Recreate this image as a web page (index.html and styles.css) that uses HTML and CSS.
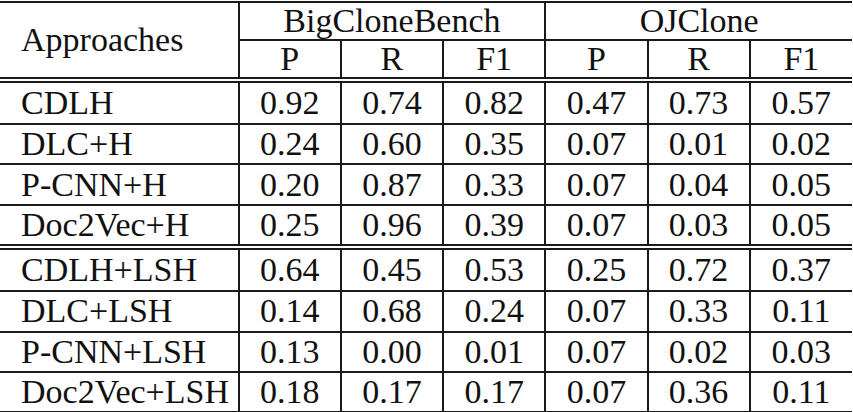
FILE: index.html
```html
<!DOCTYPE html>
<html lang="en">
<head>
    <meta charset="UTF-8">
    <meta name="viewport" content="width=device-width, initial-scale=1.0">
    <title>Clone Detection Results</title>
    <link rel="stylesheet" href="styles.css">
</head>
<body>
    <table class="results">
        <colgroup>
            <col class="col-name">
            <col class="col-num">
            <col class="col-num">
            <col class="col-num">
            <col class="col-num">
            <col class="col-num">
            <col class="col-num">
        </colgroup>
        <thead>
            <tr class="head-top">
                <th rowspan="2" class="name">Approaches</th>
                <th colspan="3">BigCloneBench</th>
                <th colspan="3" class="last">OJClone</th>
            </tr>
            <tr class="head-sub">
                <th>P</th>
                <th>R</th>
                <th>F1</th>
                <th>P</th>
                <th>R</th>
                <th class="last">F1</th>
            </tr>
        </thead>
        <tbody>
            <!-- double rule under the header -->
            <tr class="gap"><td colspan="7"></td></tr>
            <tr class="first-row">
                <td class="name">CDLH</td>
                <td>0.92</td><td>0.74</td><td>0.82</td>
                <td>0.47</td><td>0.73</td><td class="last">0.57</td>
            </tr>
            <tr>
                <td class="name">DLC+H</td>
                <td>0.24</td><td>0.60</td><td>0.35</td>
                <td>0.07</td><td>0.01</td><td class="last">0.02</td>
            </tr>
            <tr>
                <td class="name">P-CNN+H</td>
                <td>0.20</td><td>0.87</td><td>0.33</td>
                <td>0.07</td><td>0.04</td><td class="last">0.05</td>
            </tr>
            <tr>
                <td class="name">Doc2Vec+H</td>
                <td>0.25</td><td>0.96</td><td>0.39</td>
                <td>0.07</td><td>0.03</td><td class="last">0.05</td>
            </tr>
            <!-- double rule between hashing groups -->
            <tr class="gap"><td colspan="7"></td></tr>
            <tr class="first-row">
                <td class="name">CDLH+LSH</td>
                <td>0.64</td><td>0.45</td><td>0.53</td>
                <td>0.25</td><td>0.72</td><td class="last">0.37</td>
            </tr>
            <tr>
                <td class="name">DLC+LSH</td>
                <td>0.14</td><td>0.68</td><td>0.24</td>
                <td>0.07</td><td>0.33</td><td class="last">0.11</td>
            </tr>
            <tr>
                <td class="name">P-CNN+LSH</td>
                <td>0.13</td><td>0.00</td><td>0.01</td>
                <td>0.07</td><td>0.02</td><td class="last">0.03</td>
            </tr>
            <tr>
                <td class="name">Doc2Vec+LSH</td>
                <td>0.18</td><td>0.17</td><td>0.17</td>
                <td>0.07</td><td>0.36</td><td class="last">0.11</td>
            </tr>
        </tbody>
    </table>
</body>
</html>
```

FILE: styles.css
```css
body {
    margin: 0;
    padding-top: 1px;
    background: #ffffff;
    color: #111111;
    font-family: "Times New Roman", "Liberation Serif", serif;
}

.results {
    border-collapse: collapse;
    table-layout: fixed;
    width: 852px;
    font-size: 34px;
    border-top: 2px solid #1a1a1a;
    border-bottom: 2px solid #1a1a1a;
}

.col-name {
    width: 238px;
}

.col-num {
    width: 102px;
}

.results th,
.results td {
    border: 2px solid #1a1a1a;
    padding: 0;
    text-align: center;
    vertical-align: middle;
    font-weight: normal;
    white-space: nowrap;
    line-height: 1;
}

.results .name {
    border-left: none;
    text-align: left;
    padding-left: 21px;
}

.results .last {
    border-right: none;
}

.head-top th,
.head-sub th {
    height: 36px;
}

.results td {
    height: 38.4px;
}

.results .first-row td {
    height: 40px;
}

/* thin white strip that makes the double rule; no vertical lines cross it */
.results .gap td {
    height: 2px;
    border-left: none;
    border-right: none;
    font-size: 0;
    line-height: 0;
}
```
